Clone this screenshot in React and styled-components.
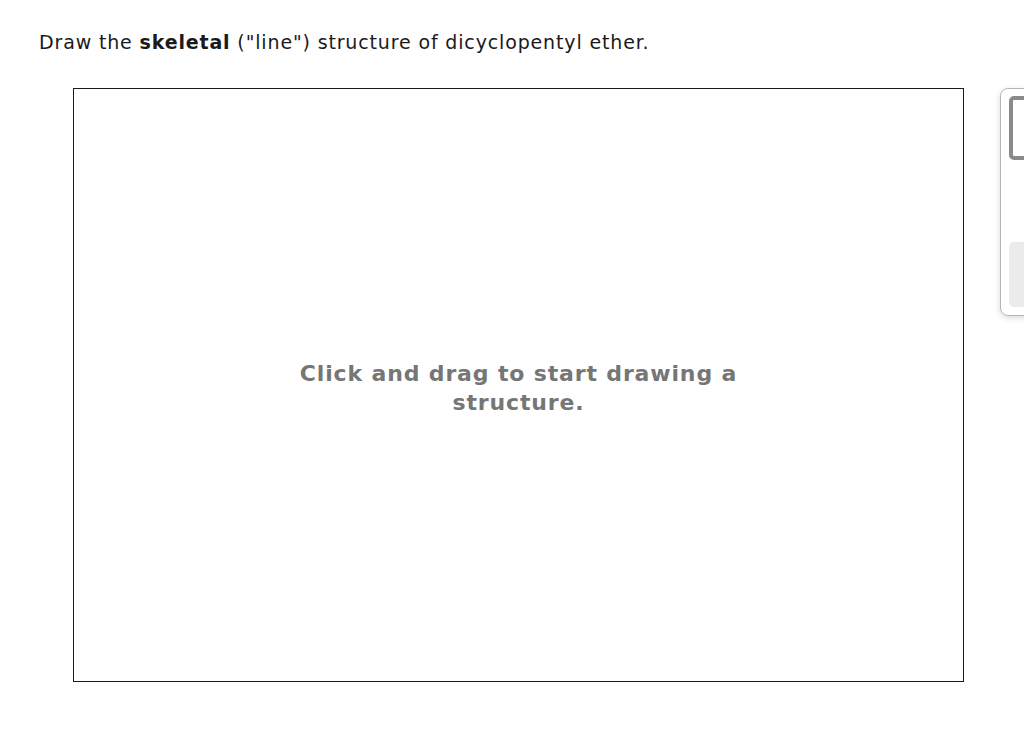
import styled, { createGlobalStyle } from 'styled-components';

const GlobalStyle = createGlobalStyle`
	html, body {
		margin: 0;
		padding: 0;
		background: #fff;
		overflow: hidden;
	}
	body {
		font-family: 'DejaVu Sans', Verdana, sans-serif;
	}
`;

const Page = styled.div`
	padding: 28px 0 0 39px;
	width: 1024px;
	height: 745px;
	box-sizing: border-box;
	overflow: hidden;
`;

const Prompt = styled.p`
	margin: 0;
	font-size: 19px;
	line-height: 28px;
	color: #1a1a1a;
	letter-spacing: 0.85px;
	white-space: nowrap;

	b {
		font-weight: bold;
	}
`;

const Workspace = styled.div`
	display: flex;
	align-items: flex-start;
	gap: 36px;
	margin-top: 32px;
	padding-left: 34px;
`;

const Canvas = styled.div`
	flex-shrink: 0;
	width: 891px;
	height: 594px;
	box-sizing: border-box;
	border: 1.5px solid #1a1a1a;
	display: flex;
	align-items: center;
	justify-content: center;
`;

const Hint = styled.div`
	font-size: 22px;
	font-weight: bold;
	color: #767676;
	text-align: center;
	line-height: 29px;
	letter-spacing: 0.85px;
	width: 480px;
	margin-top: 5px;
`;

/* side palette, partly cut off by the right edge of the window */
const Toolbox = styled.div`
	flex-shrink: 0;
	width: 80px;
	height: 228px;
	box-sizing: border-box;
	border: 1.5px solid #b5b5b5;
	border-radius: 8px;
	box-shadow: 0 2px 6px rgba(0, 0, 0, 0.15);
	padding: 7px 0 0 8px;
	display: flex;
	flex-direction: column;
	gap: 82px;
`;

const ToolSlot = styled.div`
	width: 64px;
	height: 64px;
	box-sizing: border-box;
	border: 4px solid #8a8a8a;
	border-radius: 5px;
	background: #fff;
`;

const ToolButton = styled.div`
	width: 64px;
	height: 65px;
	border-radius: 5px;
	background: #ebebeb;
`;

export default function App() {
	return (
		<>
			<GlobalStyle />
			<Page>
				<Prompt>
					Draw the <b>skeletal</b> ("line") structure of dicyclopentyl ether.
				</Prompt>
				<Workspace>
					<Canvas>
						<Hint>Click and drag to start drawing a structure.</Hint>
					</Canvas>
					<Toolbox>
						<ToolSlot />
						<ToolButton />
					</Toolbox>
				</Workspace>
			</Page>
		</>
	);
}
